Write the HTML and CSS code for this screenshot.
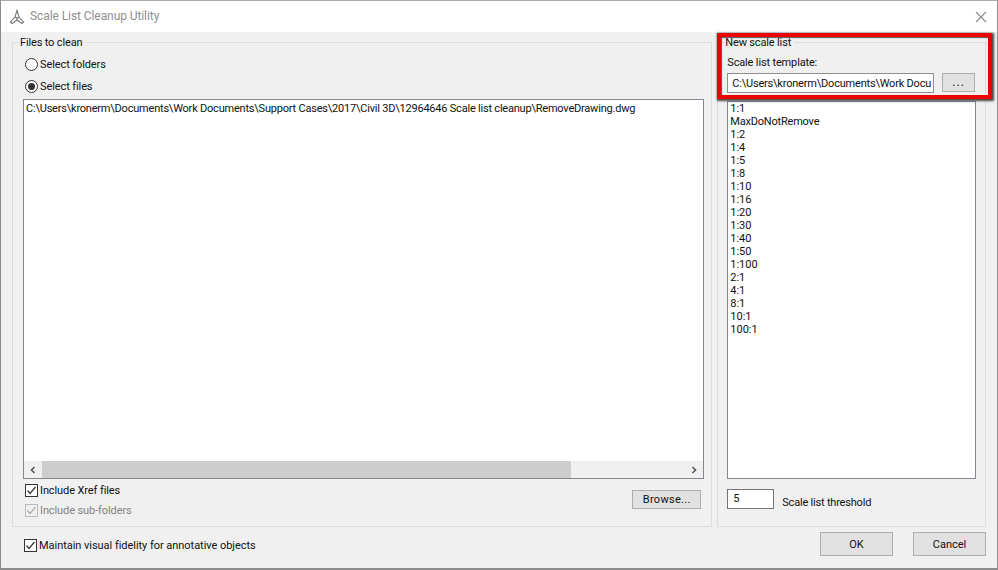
FILE: index.html
```html
<!DOCTYPE html>
<html lang="en">
<head>
<meta charset="utf-8">
<title>Scale List Cleanup Utility</title>
<link rel="stylesheet" href="styles.css">
</head>
<body>
<div class="window">
  <header class="titlebar">
    <svg class="app-icon" width="16" height="16" viewBox="0 0 16 16" fill="none" stroke="#777" stroke-width="1.1"><path d="M8 1.5 L10 8 L14.5 13 L13 14.5 L8 11 L3 14.5 L1.5 13 L6 8 Z"/><path d="M6 8 Q8 9.5 10 8 M8 11 L8 8.8"/></svg>
    <span class="title">Scale List Cleanup Utility</span>
    <svg class="close" width="12" height="12" viewBox="0 0 12 12" stroke="#8a8a8a" stroke-width="1.1"><path d="M1 1 L11 11 M11 1 L1 11"/></svg>
  </header>
  <main class="content">
    <div class="columns">
      <fieldset class="group files">
        <legend>Files to clean</legend>
        <label class="opt radio-first"><span class="radio"></span>Select folders</label>
        <label class="opt radio-second"><span class="radio on"></span>Select files</label>
        <div class="listbox filelist">
          <div class="path">C:\Users\kronerm\Documents\Work Documents\Support Cases\2017\Civil 3D\12964646 Scale list cleanup\RemoveDrawing.dwg</div>
          <div class="hscroll">
            <svg class="arrow" width="8" height="8" viewBox="0 0 8 8" fill="none" stroke="#555" stroke-width="1.6"><path d="M5.5 1 L2.5 4 L5.5 7"/></svg>
            <div class="track"><div class="thumb"></div></div>
            <svg class="arrow" width="8" height="8" viewBox="0 0 8 8" fill="none" stroke="#555" stroke-width="1.6"><path d="M2.5 1 L5.5 4 L2.5 7"/></svg>
          </div>
        </div>
        <div class="files-foot">
          <div class="checks">
            <label class="opt"><span class="check"><svg width="13" height="13" viewBox="0 0 13 13" fill="none" stroke="#333" stroke-width="1.2"><path d="M2.5 6.5 L5 9.5 L10.5 3"/></svg></span>Include Xref files</label>
            <label class="opt disabled"><span class="check"><svg width="13" height="13" viewBox="0 0 13 13" fill="none" stroke="#aaa" stroke-width="1.2"><path d="M2.5 6.5 L5 9.5 L10.5 3"/></svg></span>Include sub-folders</label>
          </div>
          <button class="btn browse">Browse...</button>
        </div>
      </fieldset>
      <fieldset class="group scales">
        <legend>New scale list</legend>
        <div class="tpl-label">Scale list template:</div>
        <div class="tpl-row">
          <div class="tpl-input">C:\Users\kronerm\Documents\Work Docu</div>
          <button class="btn dots">...</button>
        </div>
        <div class="listbox scalelist">
          <div>1:1</div><div class="name">MaxDoNotRemove</div><div>1:2</div><div>1:4</div><div>1:5</div><div>1:8</div><div>1:10</div><div>1:16</div><div>1:20</div><div>1:30</div><div>1:40</div><div>1:50</div><div>1:100</div><div>2:1</div><div>4:1</div><div>8:1</div><div>10:1</div><div>100:1</div>
        </div>
        <div class="threshold">
          <div class="num">5</div>
          <span class="thr-label">Scale list threshold</span>
        </div>
      </fieldset>
    </div>
    <div class="footer">
      <label class="opt fidelity"><span class="check"><svg width="13" height="13" viewBox="0 0 13 13" fill="none" stroke="#333" stroke-width="1.2"><path d="M2.5 6.5 L5 9.5 L10.5 3"/></svg></span>Maintain visual fidelity for annotative objects</label>
      <div class="actions">
        <button class="btn action">OK</button>
        <button class="btn action">Cancel</button>
      </div>
    </div>
  </main>
  <div class="highlight"></div>
</div>
</body>
</html>
```
FILE: styles.css
```css
* { box-sizing: border-box; }
html, body { margin: 0; padding: 0; background: #fff; }
body { width: 998px; height: 570px; overflow: hidden; font: 11px/13px Roboto, "Open Sans", sans-serif; color: #111; }
.window { position: relative; width: 998px; height: 570px; border: 1px solid #8c8c8c; border-bottom-width: 2px; border-top-color: #aaa; display: flex; flex-direction: column; background: #f0f0f0; }
.titlebar { height: 31px; flex: none; background: #fff; display: flex; align-items: center; padding: 0 10px 0 8px; }
.app-icon { flex: none; }
.title { margin-left: 5px; font-size: 12px; letter-spacing: -0.08px; color: #8f8f8f; flex: 1; }
.content { flex: 1; padding: 4px 11px 0; display: flex; flex-direction: column; }
.columns { display: flex; gap: 5px; height: 491px; flex: none; }
.group { margin: 0; padding: 0; border: 1px solid #dcdcdc; position: relative; min-width: 0; }
.group legend { padding: 0 3px 0 0; line-height: 13px; letter-spacing: -0.15px; }
.files legend { margin-left: -3px; }
.scales legend { margin-left: -2px; }
.files { width: 701px; padding: 8px 9px 0 10px; display: flex; flex-direction: column; }
.scales { width: 269px; padding: 0 10px 0 9px; }
.opt { display: flex; align-items: center; height: 14px; gap: 2px; letter-spacing: -0.1px; }
.fidelity { letter-spacing: -0.04px; }
.radio-first { margin-left: 2px; height: 14px; }
.radio-second { margin-left: 2px; margin-top: 8px; }
.radio { width: 13px; height: 13px; border: 1px solid #333; border-radius: 50%; background: #fff; display: block; flex: none; position: relative; }
.radio.on::after { content: ""; position: absolute; left: 2px; top: 2px; width: 7px; height: 7px; border-radius: 50%; background: #333; }
.check { width: 13px; height: 13px; border: 1px solid #333; background: #fff; flex: none; display: block; position: relative; }
.check svg { position: absolute; left: -1px; top: -1px; display: block; }
.listbox { border: 1px solid #828790; background: #fff; }
.filelist { height: 380px; margin-top: 6px; width: 681px; display: flex; flex-direction: column; }
.path { flex: 1; padding: 2px 0 0 2px; white-space: nowrap; overflow: hidden; letter-spacing: -0.21px; }
.hscroll { height: 17px; flex: none; background: #f0f0f0; display: flex; align-items: center; }
.arrow { flex: none; margin: 0 5px; }
.track { flex: 1; height: 100%; }
.thumb { width: 529px; height: 100%; background: #cdcdcd; }
.files-foot { display: flex; justify-content: space-between; align-items: flex-start; margin-top: 4px; }
.checks { display: flex; flex-direction: column; gap: 6px; margin-left: 2px; }
.disabled { color: #838383; }
.disabled .check { border-color: #bbb; background: #f0f0f0; }
.btn { font: inherit; color: #111; background: #e1e1e1; border: 1px solid #adadad; padding: 0; display: block; }
.browse { width: 69px; height: 19px; margin: 7px 1px 0 0; letter-spacing: 0.3px; }
.tpl-label { margin-top: 7px; height: 13px; letter-spacing: -0.15px; }
.tpl-row { display: flex; margin-top: 4px; }
.tpl-input { width: 208px; height: 20px; border: 1px solid #8e8e8e; background: #fff; padding: 3px 0 0 4px; overflow: hidden; white-space: nowrap; letter-spacing: -0.2px; }
.dots { width: 33px; height: 19px; margin-left: 8px; letter-spacing: 1px; font-size: 12px; }
.scalelist { height: 378px; width: 249px; margin-top: 8px; padding: 0 0 0 2px; }
.name { letter-spacing: -0.2px; }
.threshold { display: flex; align-items: flex-start; margin-top: 10px; }
.num { width: 47px; height: 20px; border: 1px solid #767676; background: #fff; padding: 2px 0 0 5px; }
.thr-label { margin: 7px 0 0 8px; letter-spacing: -0.2px; }
.footer { display: flex; justify-content: space-between; align-items: flex-start; margin-top: 5px; }
.footer .opt { margin: 6px 0 0 12px; }
.actions { display: flex; gap: 20px; }
.action { width: 73px; height: 24px; }
.highlight { position: absolute; left: 716px; top: 32px; width: 275px; height: 66px; border: 4px solid #ed0000; box-shadow: 1px 1px 2px 1px #444, inset 1px 1px 1px #555; }
```
